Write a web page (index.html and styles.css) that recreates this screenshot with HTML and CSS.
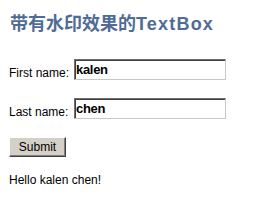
FILE: index.html
```html
<!DOCTYPE html>
<html lang="zh-CN">
<head>
    <meta charset="UTF-8">
    <title>带有水印效果的TextBox</title>
    <link rel="stylesheet" href="styles.css">
</head>
<body>
    <h1 class="title">带有水印效果的<span class="latin">TextBox</span></h1>

    <form class="name-form" onsubmit="return false;">
        <div class="field">
            <label for="firstName">First name:</label>
            <input id="firstName" type="text" value="kalen">
        </div>
        <div class="field">
            <label for="lastName">Last name:</label>
            <input id="lastName" type="text" value="chen">
        </div>
        <button type="submit">Submit</button>
    </form>

    <p class="greeting">Hello kalen chen!</p>
</body>
</html>
```

FILE: styles.css
```css
* {
    margin: 0;
    padding: 0;
    box-sizing: border-box;
}

body {
    font-family: "Liberation Sans", Arial, sans-serif;
    font-size: 12px;
    color: #000;
    background: #fff;
    padding: 13px 9px;
}

.title {
    font-family: "Liberation Sans", "Noto Sans CJK SC", sans-serif;
    font-size: 18px;
    font-weight: bold;
    line-height: 22px;
    height: 22px;
    color: #4f6c96;
    padding-left: 1px;
}

.title .latin {
    letter-spacing: 1.2px;
}

.name-form {
    margin-top: 24px;
}

.field {
    display: flex;
    align-items: flex-end;
    gap: 3px;
    margin-bottom: 18px;
}

.field label {
    line-height: 14px;
    width: 62px;
    white-space: nowrap;
}

.field input {
    width: 152px;
    height: 21px;
    padding: 0 1px;
    font-family: "Liberation Sans", Arial, sans-serif;
    font-size: 13px;
    font-weight: bold;
    letter-spacing: -0.3px;
    color: #000;
    background: #fff;
    border: 1px solid;
    border-color: #707070 #c8c8c8 #c8c8c8 #707070;
    box-shadow: inset 1px 1px 0 #404040;
    outline: none;
}

button {
    display: block;
    width: 57px;
    height: 20px;
    font-family: "Liberation Sans", Arial, sans-serif;
    font-size: 12px;
    color: #000;
    background: #d4d0c8;
    border: 1px solid;
    border-color: #fff #404040 #404040 #fff;
    box-shadow: inset -1px -1px 0 #808080;
    cursor: pointer;
}

.greeting {
    margin-top: 15px;
    line-height: 16px;
}
```
